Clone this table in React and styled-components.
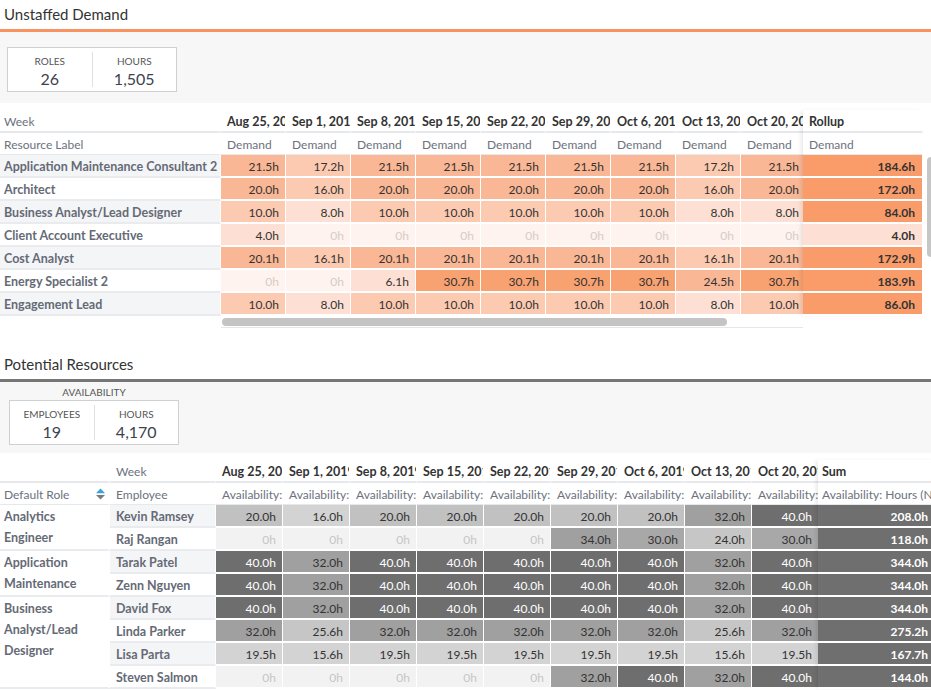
import React from "react";
import styled, { createGlobalStyle } from "styled-components";

const weeks = [
  "Aug 25, 2019",
  "Sep 1, 2019",
  "Sep 8, 2019",
  "Sep 15, 2019",
  "Sep 22, 2019",
  "Sep 29, 2019",
  "Oct 6, 2019",
  "Oct 13, 2019",
  "Oct 20, 2019",
];

const demandRows = [
  { label: "Application Maintenance Consultant 2", hours: [21.5, 17.2, 21.5, 21.5, 21.5, 21.5, 21.5, 17.2, 21.5], rollup: 184.6 },
  { label: "Architect", hours: [20, 16, 20, 20, 20, 20, 20, 16, 20], rollup: 172 },
  { label: "Business Analyst/Lead Designer", hours: [10, 8, 10, 10, 10, 10, 10, 8, 8], rollup: 84 },
  { label: "Client Account Executive", hours: [4, 0, 0, 0, 0, 0, 0, 0, 0], rollup: 4 },
  { label: "Cost Analyst", hours: [20.1, 16.1, 20.1, 20.1, 20.1, 20.1, 20.1, 16.1, 20.1], rollup: 172.9 },
  { label: "Energy Specialist 2", hours: [0, 0, 6.1, 30.7, 30.7, 30.7, 30.7, 24.5, 30.7], rollup: 183.9 },
  { label: "Engagement Lead", hours: [10, 8, 10, 10, 10, 10, 10, 8, 10], rollup: 86 },
];

const roleGroups = [
  {
    role: "Analytics Engineer",
    people: [
      { name: "Kevin Ramsey", hours: [20, 16, 20, 20, 20, 20, 20, 32, 40], sum: 208 },
      { name: "Raj Rangan", hours: [0, 0, 0, 0, 0, 34, 30, 24, 30], sum: 118 },
    ],
  },
  {
    role: "Application Maintenance",
    people: [
      { name: "Tarak Patel", hours: [40, 32, 40, 40, 40, 40, 40, 32, 40], sum: 344 },
      { name: "Zenn Nguyen", hours: [40, 32, 40, 40, 40, 40, 40, 32, 40], sum: 344 },
    ],
  },
  {
    role: "Business Analyst/Lead Designer",
    people: [
      { name: "David Fox", hours: [40, 32, 40, 40, 40, 40, 40, 32, 40], sum: 344 },
      { name: "Linda Parker", hours: [32, 25.6, 32, 32, 32, 32, 32, 25.6, 32], sum: 275.2 },
      { name: "Lisa Parta", hours: [19.5, 15.6, 19.5, 19.5, 19.5, 19.5, 19.5, 15.6, 19.5], sum: 167.7 },
      { name: "Steven Salmon", hours: [0, 0, 0, 0, 0, 32, 40, 32, 40], sum: 144 },
    ],
  },
];

const people = roleGroups.flatMap((g) => g.people);

const fmt = (v) => (v === 0 ? "0h" : v.toFixed(1) + "h");

// heat colours, bucketed like the report does
const demandShade = (v) => {
  if (v === 0) return ["#fef3ee", "#d6ccc7"];
  if (v < 9) return ["#fde0d3", "#333"];
  if (v < 18) return ["#fccab1", "#333"];
  if (v < 25) return ["#fab795", "#333"];
  return ["#f9a271", "#333"];
};

const rollupShade = (v) => (v >= 50 ? "#f99c69" : "#fde0d3");

const availShade = (v) => {
  if (v === 0) return ["#f2f2f2", "#c6c6c6"];
  if (v < 20) return ["#d3d3d3", "#333"];
  if (v < 21) return ["#c1c1c1", "#333"];
  if (v < 27) return ["#c6c6c6", "#333"];
  if (v < 31) return ["#a8a8a8", "#333"];
  if (v < 36) return ["#a0a0a0", "#333"];
  return ["#6e6e6e", "#fff"];
};

const App = () => {
  return (
    <Page>
      <GlobalStyle />

      <SectionTitle $accent="#f79462">Unstaffed Demand</SectionTitle>
      <Band $pt={15} $pl={7}>
        <KpiGroup>
          <KpiBox>
            <KpiItem>
              <KpiLabel>Roles</KpiLabel>
              <KpiValue>26</KpiValue>
            </KpiItem>
            <KpiDivider />
            <KpiItem>
              <KpiLabel>Hours</KpiLabel>
              <KpiValue>1,505</KpiValue>
            </KpiItem>
          </KpiBox>
        </KpiGroup>
      </Band>

      <Grid>
        <FrozenPane>
          <HeadRow>
            <HeadCell $w={221} $rule={2} $pl={4}>Week</HeadCell>
          </HeadRow>
          <HeadRow>
            <HeadCell $w={221} $rule={1} $pl={4}>Resource Label</HeadCell>
          </HeadRow>
          {demandRows.map((r, i) => (
            <LabelCell key={r.label} $w={221} $alt={i % 2 === 0}>
              {r.label}
            </LabelCell>
          ))}
        </FrozenPane>

        <ScrollPane $w={582}>
          <HeadRow>
            {weeks.map((w) => (
              <HeadCell key={w} $w={65} $rule={2} $strong>
                {w}
              </HeadCell>
            ))}
          </HeadRow>
          <HeadRow>
            {weeks.map((w) => (
              <HeadCell key={w} $w={65} $rule={1}>
                Demand
              </HeadCell>
            ))}
          </HeadRow>
          {demandRows.map((r) => (
            <DataRow key={r.label}>
              {r.hours.map((v, j) => {
                const [bg, fg] = demandShade(v);
                return (
                  <ValueCell key={j} $w={65} $bg={bg} $fg={fg}>
                    {fmt(v)}
                  </ValueCell>
                );
              })}
            </DataRow>
          ))}
          <HScrollTrack>
            <HScrollThumb />
          </HScrollTrack>
        </ScrollPane>

        <TotalPane $w={120}>
          <HeadRow>
            <HeadCell $w={120} $rule={2} $strong>Rollup</HeadCell>
          </HeadRow>
          <HeadRow>
            <HeadCell $w={120} $rule={1}>Demand</HeadCell>
          </HeadRow>
          {demandRows.map((r) => (
            <ValueCell key={r.label} $w={120} $bg={rollupShade(r.rollup)} $fg="#333" $bold $pr={7}>
              {fmt(r.rollup)}
            </ValueCell>
          ))}
        </TotalPane>

        <VScrollTrack>
          <VScrollThumb />
        </VScrollTrack>
      </Grid>

      <SectionTitle $accent="#767676" $top={22}>Potential Resources</SectionTitle>
      <Band $pt={4} $pl={9}>
        <KpiGroup>
          <KpiCaption>Availability</KpiCaption>
          <KpiBox>
            <KpiItem>
              <KpiLabel>Employees</KpiLabel>
              <KpiValue>19</KpiValue>
            </KpiItem>
            <KpiDivider />
            <KpiItem>
              <KpiLabel>Hours</KpiLabel>
              <KpiValue>4,170</KpiValue>
            </KpiItem>
          </KpiBox>
        </KpiGroup>
      </Band>

      <Grid>
        <FrozenPane>
          <HeadRow>
            <HeadCell $w={110} $rule={2} $gap={2} />
            <HeadCell $w={106} $rule={2}>Week</HeadCell>
          </HeadRow>
          <HeadRow>
            <SortHeadCell $w={110} $rule={1} $gap={2} $pl={4}>
              Default Role
              <SortIcon width="9" height="12" viewBox="0 0 9 12">
                <path d="M0 5.2 L4.5 0.6 L9 5.2 Z" fill="#3aa3db" />
                <path d="M0 7 L9 7 L4.5 11.4 Z" fill="#7b7b7b" />
              </SortIcon>
            </SortHeadCell>
            <HeadCell $w={106} $rule={1}>Employee</HeadCell>
          </HeadRow>
          <FrozenBody>
            <RoleColumn>
              {roleGroups.map((g) => (
                <RoleCell key={g.role} $rows={g.people.length}>
                  {g.role}
                </RoleCell>
              ))}
            </RoleColumn>
            <div>
              {people.map((p, i) => (
                <LabelCell key={p.name} $w={106} $pl={6} $alt={i % 2 === 0}>
                  {p.name}
                </LabelCell>
              ))}
            </div>
          </FrozenBody>
        </FrozenPane>

        <ScrollPane $w={602}>
          <HeadRow>
            {weeks.map((w) => (
              <HeadCell key={w} $w={67} $rule={2} $strong>
                {w}
              </HeadCell>
            ))}
          </HeadRow>
          <HeadRow>
            {weeks.map((w) => (
              <HeadCell key={w} $w={67} $rule={1}>
                Availability:
              </HeadCell>
            ))}
          </HeadRow>
          {people.map((p) => (
            <DataRow key={p.name}>
              {p.hours.map((v, j) => {
                const [bg, fg] = availShade(v);
                return (
                  <ValueCell key={j} $w={67} $bg={bg} $fg={fg}>
                    {fmt(v)}
                  </ValueCell>
                );
              })}
            </DataRow>
          ))}
        </ScrollPane>

        <TotalPane $w={117}>
          <HeadRow>
            <HeadCell $w={117} $rule={2} $strong $pl={4}>Sum</HeadCell>
          </HeadRow>
          <HeadRow>
            <HeadCell $w={117} $rule={1} $pl={4}>Availability: Hours (Nominal)</HeadCell>
          </HeadRow>
          {people.map((p) => (
            <ValueCell key={p.name} $w={117} $bg="#6f6f6f" $fg="#fff" $bold>
              {fmt(p.sum)}
            </ValueCell>
          ))}
        </TotalPane>
      </Grid>
    </Page>
  );
};

export default App;

const GlobalStyle = createGlobalStyle`
  html, body {
    margin: 0;
    padding: 0;
    background: #fff;
  }
  body {
    font-family: Lato, "Open Sans", "Liberation Sans", sans-serif;
    color: #333;
    overflow: hidden;
  }
  * {
    box-sizing: border-box;
  }
`;

const Page = styled.div`
  width: 931px;
  height: 690px;
  overflow: hidden;
`;

const SectionTitle = styled.h2`
  margin: ${(p) => p.$top || 0}px 0 0;
  padding-left: 4px;
  height: 32px;
  line-height: 29px;
  font-size: 15px;
  font-weight: 400;
  color: #333;
  border-bottom: 3px solid ${(p) => p.$accent};
`;

const Band = styled.div`
  height: 71px;
  background: #f7f7f7;
  padding: ${(p) => p.$pt}px 0 0 ${(p) => p.$pl}px;
`;

const KpiGroup = styled.div`
  width: 170px;
`;

const KpiCaption = styled.div`
  text-align: center;
  font-size: 10px;
  line-height: 12px;
  color: #555;
  text-transform: uppercase;
  margin-bottom: 2px;
`;

const KpiBox = styled.div`
  display: flex;
  height: 45px;
  border: 1px solid #cfd0d2;
  background: #fff;
`;

const KpiItem = styled.div`
  flex: 1;
  display: flex;
  flex-direction: column;
  align-items: center;
  padding-top: 7px;
`;

const KpiLabel = styled.div`
  font-size: 10px;
  line-height: 12px;
  color: #555;
  text-transform: uppercase;
`;

const KpiValue = styled.div`
  margin-top: 2px;
  font-size: 16px;
  line-height: 20px;
  color: #3d424d;
`;

const KpiDivider = styled.div`
  width: 1px;
  margin: 4px 0;
  background: #e0e0e0;
`;

const Grid = styled.div`
  display: flex;
  align-items: flex-start;
  margin-top: 7px;
`;

const FrozenPane = styled.div`
  flex: none;
`;

const ScrollPane = styled.div`
  flex: none;
  width: ${(p) => p.$w}px;
  overflow: hidden;
`;

const TotalPane = styled.div`
  flex: none;
  width: ${(p) => p.$w}px;
  position: relative;
  z-index: 1;
  background: #fff;
  box-shadow: -3px 0 4px -1px rgba(0, 0, 0, 0.09);
`;

const HeadRow = styled.div`
  display: flex;
`;

const HeadCell = styled.div`
  flex: none;
  width: ${(p) => p.$w}px;
  height: ${(p) => 21 + p.$rule}px;
  line-height: 21px;
  padding: 1px 6px 0 ${(p) => p.$pl ?? 6}px;
  border-bottom: ${(p) => p.$rule}px solid #e6e8ec;
  border-right: ${(p) => p.$gap ?? 1}px solid #fff;
  font-size: ${(p) => (p.$strong ? 12.5 : 12)}px;
  font-weight: ${(p) => (p.$strong ? 700 : 400)};
  color: ${(p) => (p.$strong ? "#333" : "#6c727e")};
  white-space: nowrap;
  overflow: hidden;
`;

const SortHeadCell = styled(HeadCell)`
  display: flex;
  align-items: center;
  justify-content: space-between;
  padding-right: 3px;
`;

const SortIcon = styled.svg`
  display: block;
  flex: none;
`;

const DataRow = styled.div`
  display: flex;
`;

const LabelCell = styled.div`
  width: ${(p) => p.$w}px;
  height: 23px;
  line-height: 21px;
  padding: 1px 0 0 ${(p) => p.$pl ?? 4}px;
  border-bottom: 2px solid #e9ebef;
  border-right: 1px solid #fff;
  background: ${(p) => (p.$alt ? "#f4f5f7" : "#fff")};
  font-size: 12.5px;
  font-weight: 700;
  color: #656a76;
  white-space: nowrap;
  overflow: hidden;
`;

const ValueCell = styled.div`
  flex: none;
  width: ${(p) => p.$w}px;
  height: 23px;
  line-height: 21px;
  padding: 1px ${(p) => p.$pr ?? 6}px 0 0;
  text-align: right;
  border-right: 1px solid #fff;
  border-bottom: 2px solid #fff;
  background: ${(p) => p.$bg};
  color: ${(p) => p.$fg};
  font-size: 12px;
  font-weight: ${(p) => (p.$bold ? 700 : 400)};
  white-space: nowrap;
  overflow: hidden;
`;

const HScrollTrack = styled.div`
  padding: 2px 0 1px 1px;
  border-bottom: 1px solid #e6e6e6;
`;

const HScrollThumb = styled.div`
  width: 505px;
  height: 8px;
  border-radius: 4px;
  background: #c4c4c4;
`;

const VScrollTrack = styled.div`
  flex: none;
  width: 8px;
  margin-left: 4px;
  padding-top: 47px;
`;

const VScrollThumb = styled.div`
  height: 100px;
  border-radius: 4px;
  background: #c6c6c6;
`;

const FrozenBody = styled.div`
  display: flex;
`;

const RoleColumn = styled.div`
  width: 110px;
`;

const RoleCell = styled.div`
  height: ${(p) => p.$rows * 23}px;
  padding: 1px 14px 0 4px;
  border-bottom: 2px solid #e9ebef;
  border-right: 2px solid #fff;
  font-size: 12.5px;
  font-weight: 700;
  line-height: 21px;
  color: #656a76;
`;
